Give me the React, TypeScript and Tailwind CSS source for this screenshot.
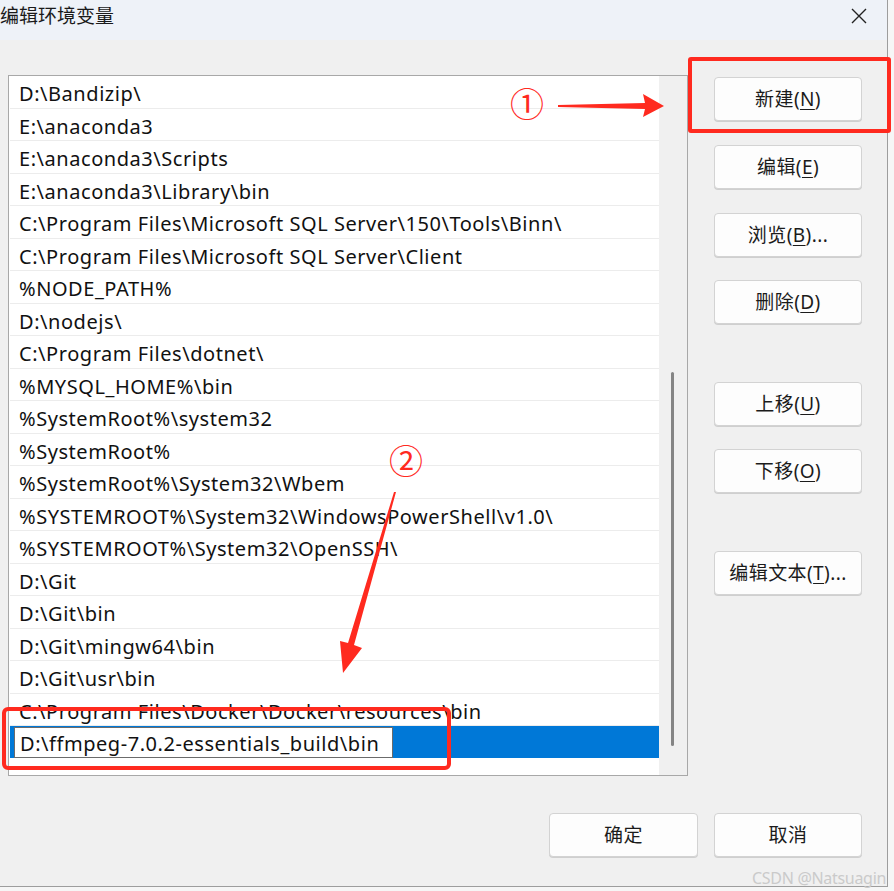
import React from 'react';

const paths = [
  'D:\\Bandizip\\',
  'E:\\anaconda3',
  'E:\\anaconda3\\Scripts',
  'E:\\anaconda3\\Library\\bin',
  'C:\\Program Files\\Microsoft SQL Server\\150\\Tools\\Binn\\',
  'C:\\Program Files\\Microsoft SQL Server\\Client',
  '%NODE_PATH%',
  'D:\\nodejs\\',
  'C:\\Program Files\\dotnet\\',
  '%MYSQL_HOME%\\bin',
  '%SystemRoot%\\system32',
  '%SystemRoot%',
  '%SystemRoot%\\System32\\Wbem',
  '%SYSTEMROOT%\\System32\\WindowsPowerShell\\v1.0\\',
  '%SYSTEMROOT%\\System32\\OpenSSH\\',
  'D:\\Git',
  'D:\\Git\\bin',
  'D:\\Git\\mingw64\\bin',
  'D:\\Git\\usr\\bin',
  'C:\\Program Files\\Docker\\Docker\\resources\\bin',
];

const font = "font-['Noto_Sans','Noto_Sans_CJK_SC',sans-serif]";

function Btn({ label, hot, tail = '', className = '' }: { label: string; hot?: string; tail?: string; className?: string }) {
  return (
    <button
      className={`w-[148px] h-[44px] rounded-[4px] border border-[#d3d3d3] bg-[#fdfdfd] text-[19px] tracking-[0.4px] text-[#1b1b1b] shadow-[0_1px_0_#cfcfcf] ${className}`}
    >
      {label}
      {hot && (
        <>
          (<span className="underline underline-offset-[3px]">{hot}</span>){tail}
        </>
      )}
    </button>
  );
}

export default function App() {
  return (
    <div className={`relative w-[894px] h-[891px] overflow-hidden bg-[#f6f6f6] ${font}`}>
      <div className="w-[888px] h-[887px] flex flex-col bg-[#f0f0f0] border-r border-b border-[#9d9d9d]">
        {/* title bar */}
        <div className="h-[40px] shrink-0 flex items-start justify-between bg-[#eef2f8] pt-[3px] pr-[19px]">
          <span className="text-[19px] text-[#1a1a1a] leading-[26px]">编辑环境变量</span>
          <svg width="18" height="18" viewBox="0 0 18 18" className="mt-[4px]">
            <path d="M2 2 L16 16 M16 2 L2 16" stroke="#222" strokeWidth="1.4" />
          </svg>
        </div>

        {/* body */}
        <div className="flex pt-[35px] pl-[8px]">
          <div className="w-[680px] h-[701px] flex border border-[#a8a8a8] bg-white">
            <div className="flex-1 flex flex-col pl-[1px]">
              {paths.map((p) => (
                <div
                  key={p}
                  className="h-[32.5px] shrink-0 flex items-center pl-[9px] pt-[5px] border-b border-[#ececec] text-[20px] tracking-[0.55px] text-[#111] whitespace-nowrap"
                >
                  {p}
                </div>
              ))}
              <div className="h-[32px] shrink-0 flex items-center bg-[#0078d7] pl-[4px]">
                <div className="w-[379px] h-[31px] flex items-center pl-[5px] pt-[4px] bg-white border border-[#6b6b6b] text-[20px] tracking-[0.55px] text-[#111] whitespace-nowrap overflow-hidden">
                  D:\ffmpeg-7.0.2-essentials_build\bin
                </div>
              </div>
            </div>
            <div className="w-[28px] bg-[#f0f0f0] flex">
              <div className="ml-[12px] mt-[296px] w-[3px] h-[374px] rounded-full bg-[#858585]" />
            </div>
          </div>

          <div className="ml-[26px] pt-[2px] flex flex-col">
            <Btn label="新建" hot="N" />
            <Btn label="编辑" hot="E" className="mt-[24px]" />
            <Btn label="浏览" hot="B" tail="..." className="mt-[24px]" />
            <Btn label="删除" hot="D" className="mt-[23px]" />
            <Btn label="上移" hot="U" className="mt-[58px]" />
            <Btn label="下移" hot="O" className="mt-[23px]" />
            <Btn label="编辑文本" hot="T" tail="..." className="mt-[58px]" />
          </div>
        </div>

        <div className="flex justify-end gap-[16px] pr-[25px] mt-[37px]">
          <Btn label="确定" className="w-[149px] h-[43px]" />
          <Btn label="取消" className="w-[148px] h-[43px]" />
        </div>
      </div>

      {/* watermark */}
      <div className="absolute left-[752px] top-[866px] text-[16px] text-[#cacaca] tracking-[-0.3px] whitespace-nowrap">
        CSDN @Natsuagin
      </div>

      {/* annotations */}
      <div className="absolute left-[688px] top-[57px] w-[203px] h-[76px] border-[4px] border-[#ff2a1f] rounded-[3px]" />
      <div className="absolute left-[2px] top-[707px] w-[449px] h-[63px] border-[4px] border-[#ff2a1f] rounded-[6px]" />
      <div className="absolute left-[510px] top-[86px] text-[34px] leading-none text-[#ff2a1f] font-['Noto_Sans_CJK_SC',sans-serif]">①</div>
      <div className="absolute left-[389px] top-[443px] text-[34px] leading-none text-[#ff2a1f] font-['Noto_Sans_CJK_SC',sans-serif]">②</div>
      <svg className="absolute left-0 top-0" width="894" height="891" viewBox="0 0 894 891">
        <polygon points="558,105 645,103 643,94 664,106 643,117 645,109 558,107" fill="#ff2a1f" />
        <polygon points="394,492 396,492 354,645 362,648 343,673 340,641 348,643" fill="#ff2a1f" />
      </svg>
    </div>
  );
}
